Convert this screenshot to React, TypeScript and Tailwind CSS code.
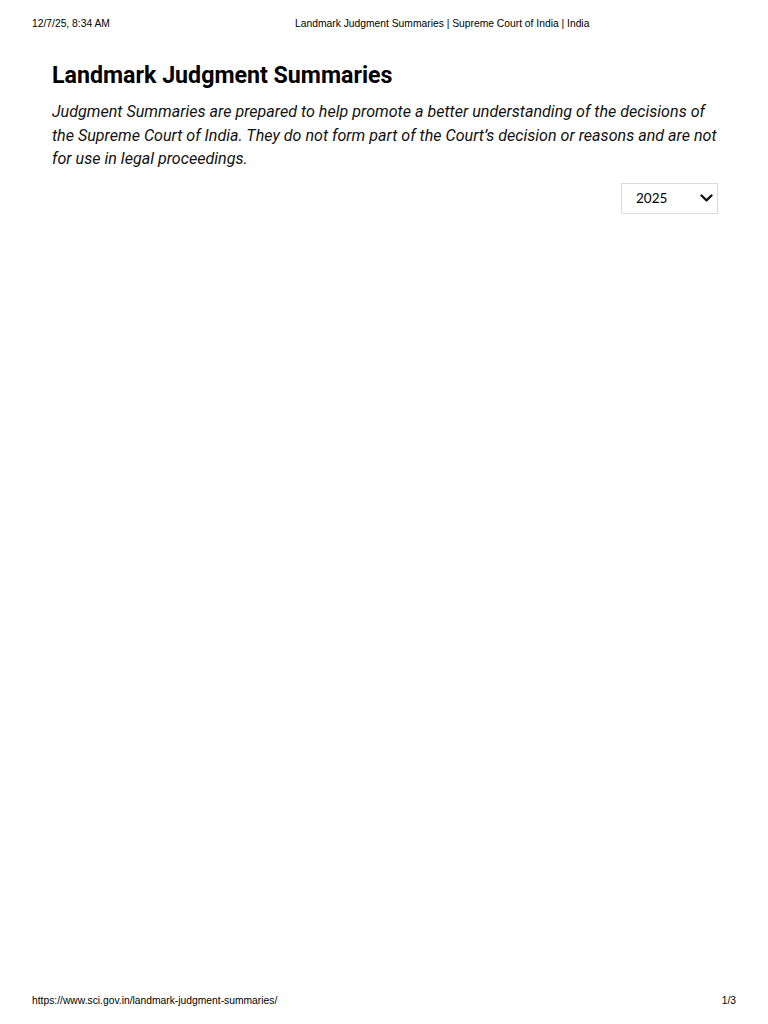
import React from 'react';

const ChevronDown = () => (
  <svg width="13" height="8" viewBox="0 0 13 8" fill="none">
    <path d="M1.5 1.5 L6.5 6.3 L11.5 1.5" stroke="#111" strokeWidth="2.3" strokeLinecap="round" strokeLinejoin="round" />
  </svg>
);

export default function App() {
  return (
    <div className="min-h-[1024px] w-[768px] bg-white flex flex-col text-black">
      <div className="flex items-center h-[20px] mt-[14px] px-[32px] text-[10.3px] font-['Liberation_Sans',Arial,sans-serif]">
        <span className="w-[263px]">12/7/25, 8:34 AM</span>
        <span>Landmark Judgment Summaries | Supreme Court of India | India</span>
      </div>

      <main className="flex-1 pl-[52px] pr-[50px] pt-[26px] font-['Roboto',sans-serif]">
        <h1 className="text-[23.2px] leading-[30px] font-bold">Landmark Judgment Summaries</h1>
        <p className="mt-[10px] text-[16.1px] leading-[23.5px] italic text-[#111] whitespace-nowrap">
          Judgment Summaries are prepared to help promote a better understanding of the decisions of
          <br />
          the Supreme Court of India. They do not form part of the Court’s decision or reasons and are not
          <br />
          for use in legal proceedings.
        </p>
        <div className="flex justify-end mt-[12px]">
          <div className="w-[97px] h-[31px] border border-[#dcdcdc] flex items-center justify-between pl-[14px] pr-[4px] font-['Lato',sans-serif] text-[13.5px]">
            <span>2025</span>
            <ChevronDown />
          </div>
        </div>
      </main>

      <div className="flex items-center justify-between h-[20px] mb-[13px] px-[32px] text-[10.3px] font-['Liberation_Sans',Arial,sans-serif]">
        <span>https://www.sci.gov.in/landmark-judgment-summaries/</span>
        <span>1/3</span>
      </div>
    </div>
  );
}
